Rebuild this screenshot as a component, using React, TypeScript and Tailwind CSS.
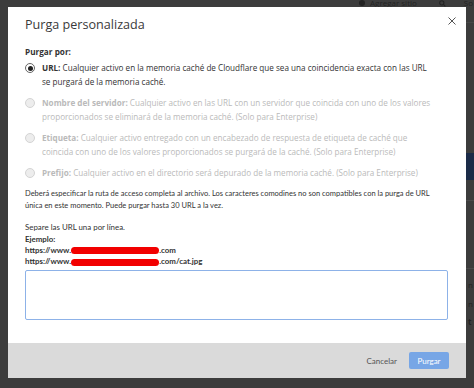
import React from 'react';

const sans = { fontFamily: '"Open Sans", "Noto Sans", sans-serif' };
const para = { fontFamily: 'Lato, "Open Sans", sans-serif' };

interface Option {
  label: string;
  text: string;
  enabled?: boolean;
}

const options: Option[] = [
  {
    label: 'URL:',
    text: 'Cualquier activo en la memoria caché de Cloudflare que sea una coincidencia exacta con las URL se purgará de la memoria caché.',
    enabled: true,
  },
  {
    label: 'Nombre del servidor:',
    text: 'Cualquier activo en las URL con un servidor que coincida con uno de los valores proporcionados se eliminará de la memoria caché. (Solo para Enterprise)',
  },
  {
    label: 'Etiqueta:',
    text: 'Cualquier activo entregado con un encabezado de respuesta de etiqueta de caché que coincida con uno de los valores proporcionados se purgará de la caché. (Solo para Enterprise)',
  },
  {
    label: 'Prefijo:',
    text: 'Cualquier activo en el directorio será depurado de la memoria caché. (Solo para Enterprise)',
  },
];

const Radio = ({ checked, enabled }: { checked?: boolean; enabled?: boolean }) => (
  <span
    className={`mt-[2px] flex h-[10px] w-[10px] shrink-0 items-center justify-center rounded-full border ${
      enabled ? 'border-[#666] bg-white' : 'border-[#d4d4d4] bg-[#ededed]'
    }`}
  >
    {checked && <span className="h-[5px] w-[5px] rounded-full bg-[#222]" />}
  </span>
);

const Redacted = () => <span className="inline-block h-[7px] w-[88px] rounded-full bg-[#f20000] align-middle" />;

export default function App() {
  return (
    <div className="relative h-[388px] w-[474px] overflow-hidden bg-[#3c3c3c]" style={sans}>
      {/* page behind the overlay */}
      <div className="absolute left-[359px] top-[-2px] flex items-center text-[8px] leading-[10px] text-[#232323]">
        <span className="h-[6px] w-[6px] rounded-full bg-[#222]" />
        <span className="ml-[5px]">Agregar sitio</span>
        <svg className="ml-[22px] h-[7px] w-[7px]" viewBox="0 0 10 10" fill="none" stroke="#232323" strokeWidth="1.5">
          <circle cx="4" cy="4" r="3" />
          <path d="M6.3 6.3 9 9" />
        </svg>
        <span className="ml-[18px]">So</span>
      </div>
      <div className="absolute left-[466px] top-[22px] h-[1px] w-[8px] bg-[#474747]" />
      <div className="absolute left-[466px] top-[153px] h-[27px] w-[8px] bg-[#1b2b48]" />
      <div className="absolute left-[466px] top-[200px] h-[1px] w-[8px] bg-[#4a4a4a]" />
      <div className="absolute left-[466px] top-[268px] h-[1px] w-[8px] bg-[#4a4a4a]" />
      <div className="absolute left-[468px] top-[280px] text-[8px] leading-[10px] text-[#222]">
        <div>n</div>
        <div className="mt-[9px]">n</div>
        <div className="mt-[8px] font-bold">t</div>
      </div>

      <div className="relative flex pl-[8px] pt-[7px]">
        <div className="flex h-[371px] w-[458px] flex-col bg-white">
          <div className="relative flex-1 px-[17px]">
            <div className="pt-[6px] text-[12.6px] leading-[24px] text-[#3a3a3a]">Purga personalizada</div>
            <svg
              className="absolute right-[10px] top-[10px] h-[8px] w-[8px]"
              viewBox="0 0 8 8"
              fill="none"
              stroke="#555"
              strokeWidth="1"
            >
              <path d="M0.5 0.5 7.5 7.5M7.5 0.5 0.5 7.5" />
            </svg>

            <div className="mt-[8px] text-[8.2px] font-bold leading-[14px] text-[#333]">Purgar por:</div>

            <div className="mt-[2px] flex flex-col gap-[7px]">
              {options.map((o) => (
                <div key={o.label} className="flex gap-[7px] pr-[14px]">
                  <Radio checked={o.enabled} enabled={o.enabled} />
                  <div className={`text-[8.15px] leading-[14px] ${o.enabled ? 'text-[#333]' : 'text-[#bababa]'}`}>
                    <span className="font-bold">{o.label}</span> {o.text}
                  </div>
                </div>
              ))}
            </div>

            <div className="mt-[8px] pr-[10px] text-[7.5px] leading-[11.6px] text-[#333]" style={para}>
              Deberá especificar la ruta de acceso completa al archivo. Los caracteres comodines no son compatibles con la
              purga de URL única en este momento. Puede purgar hasta 30 URL a la vez.
            </div>

            <div className="mt-[11px] text-[7.9px] leading-[11.4px] text-[#333]" style={para}>
              <div>Separe las URL una por línea.</div>
              <div className="font-bold">Ejemplo:</div>
              <div className="font-bold">
                https://www.
                <Redacted />
                .com
              </div>
              <div className="font-bold">
                https://www.
                <Redacted />
                .com/cat.jpg
              </div>
            </div>

            <textarea className="mt-[2px] block h-[50px] w-[423px] resize-none rounded-[2px] border border-[#8db2e8] bg-white outline-none" />
          </div>

          <div className="flex h-[35px] items-center justify-end gap-[12px] bg-[#dadada] pr-[17px]">
            <span className="text-[8px] text-[#555]" style={para}>Cancelar</span>
            <button className="h-[17px] w-[40px] rounded-[2px] bg-[#77a6e6] text-[8px] text-white" style={para}>
              Purgar
            </button>
          </div>
        </div>
      </div>
    </div>
  );
}
